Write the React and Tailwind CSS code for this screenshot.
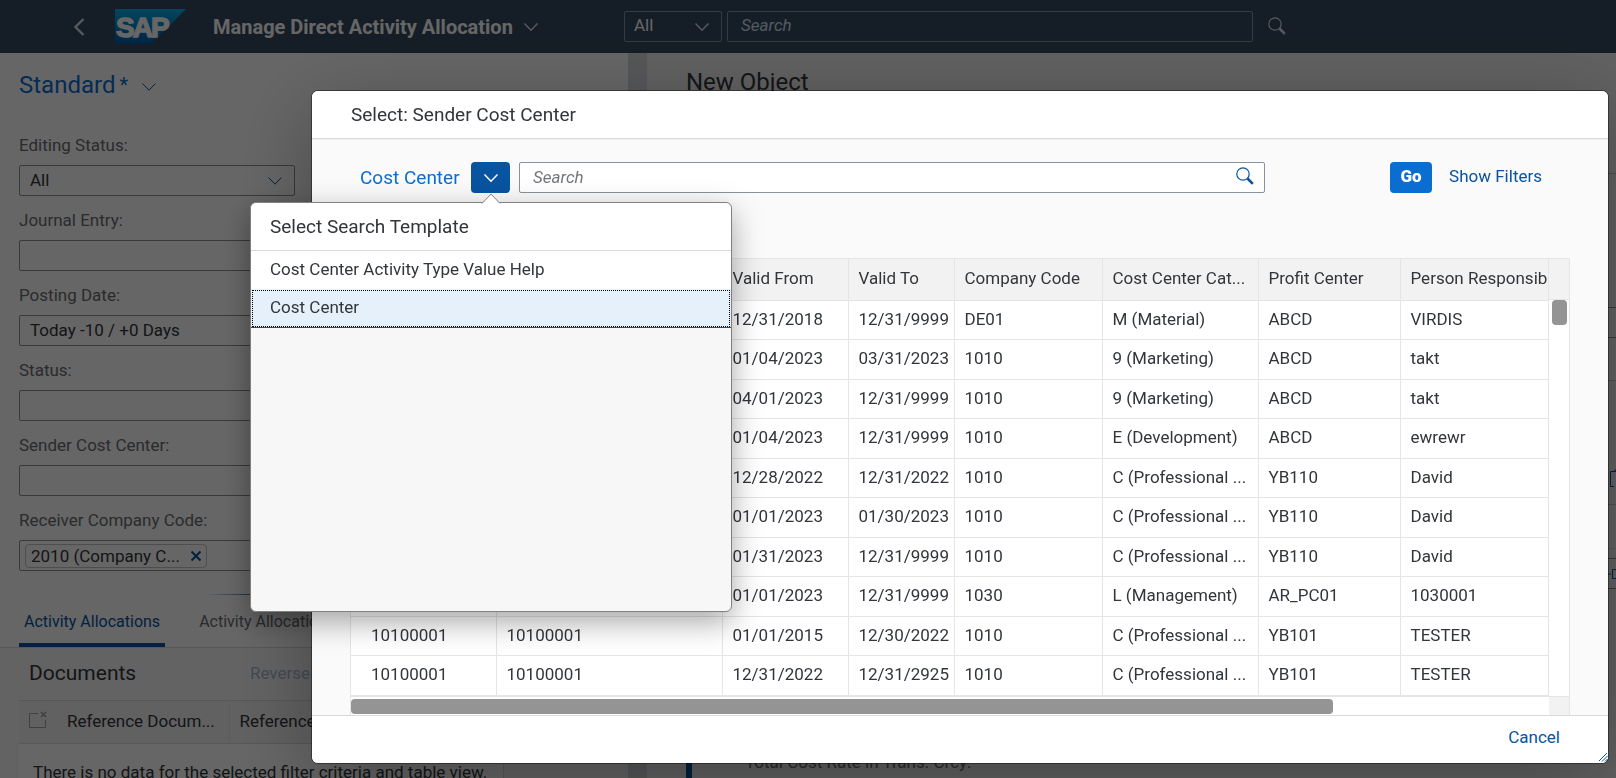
import { useState } from "react";

const columns = [
  { id: 'id', name: '', width: 'w-[145px]' },
  { id: 'text', name: '', width: 'w-[226px]' },
  { id: 'from', name: 'Valid From', width: 'w-[126px]' },
  { id: 'to', name: 'Valid To', width: 'w-[106px]' },
  { id: 'company', name: 'Company Code', width: 'w-[148px]' },
  { id: 'category', name: 'Cost Center Cat...', width: 'w-[156px]' },
  { id: 'profit', name: 'Profit Center', width: 'w-[142px]' },
  { id: 'person', name: 'Person Responsible', width: '' },
];

const rows = [
  ['', '', '12/31/2018', '12/31/9999', 'DE01', 'M (Material)', 'ABCD', 'VIRDIS'],
  ['', '', '01/04/2023', '03/31/2023', '1010', '9 (Marketing)', 'ABCD', 'takt'],
  ['', '', '04/01/2023', '12/31/9999', '1010', '9 (Marketing)', 'ABCD', 'takt'],
  ['', '', '01/04/2023', '12/31/9999', '1010', 'E (Development)', 'ABCD', 'ewrewr'],
  ['', '', '12/28/2022', '12/31/2022', '1010', 'C (Professional ...', 'YB110', 'David'],
  ['', '', '01/01/2023', '01/30/2023', '1010', 'C (Professional ...', 'YB110', 'David'],
  ['', '', '01/31/2023', '12/31/9999', '1010', 'C (Professional ...', 'YB110', 'David'],
  ['', '', '01/01/2023', '12/31/9999', '1030', 'L (Management)', 'AR_PC01', '1030001'],
  ['10100001', '10100001', '01/01/2015', '12/30/2022', '1010', 'C (Professional ...', 'YB101', 'TESTER'],
  ['10100001', '10100001', '12/31/2022', '12/31/2925', '1010', 'C (Professional ...', 'YB101', 'TESTER'],
];

const filters = [
  { id: 'journal', label: 'Journal Entry:', value: '' },
  { id: 'posting', label: 'Posting Date:', value: 'Today -10 / +0 Days' },
  { id: 'status', label: 'Status:', value: '' },
  { id: 'sender', label: 'Sender Cost Center:', value: '' },
];

const templates = ['Cost Center Activity Type Value Help', 'Cost Center'];

const Chevron = ({ className }) => (
  <svg className={`pointer-events-none ${className}`} width="16" height="10" viewBox="0 0 16 10" fill="none" stroke="currentColor">
    <path d="M1.500 1.500 8 8.200l6.500-6.700" />
  </svg>
);

const Magnifier = ({ className }) => (
  <svg className={className} width="18" height="18" viewBox="0 0 18 18" fill="none" stroke="currentColor">
    <circle cx="7" cy="7" r="6.2" strokeWidth="1.2" />
    <path d="m11.500 11.500 5.300 5.300" strokeWidth="2.6" />
  </svg>
);

const SapLogo = () => (
  <svg width="71" height="35" viewBox="0 0 71 35">
    <defs>
      <linearGradient id="sap" x1="0" y1="0" x2="0" y2="1">
        <stop offset="0" stopColor="#00b1eb" />
        <stop offset="0.5" stopColor="#0085cc" />
        <stop offset="1" stopColor="#005ca8" />
      </linearGradient>
    </defs>
    <path d="M0 0h71L36 35H0z" fill="url(#sap)" />
    <text x="1" y="28" fontFamily="Liberation Sans" fontWeight="700" fontSize="28" letterSpacing="-2" fill="#fff" stroke="#fff" strokeWidth="1.4">SAP</text>
  </svg>
);

const ShellBar = () => (
  <header className="flex h-[53px] shrink-0 items-center bg-[#354a5f] text-white">
    <button aria-label="Back" className="ml-[74px]">
      <svg width="11" height="18" viewBox="0 0 11 18" fill="none" stroke="#d1e0ee" strokeWidth="2.4">
        <path d="M9.500 1 1.500 9l8 8" />
      </svg>
    </button>
    <div className="ml-[30px]"><SapLogo /></div>
    <button className="ml-[27px] flex items-center gap-[10px] text-[20px] font-bold whitespace-nowrap">
      Manage Direct Activity Allocation
      <Chevron className="stroke-[1.5] text-[#d1e0ee]" />
    </button>
    <div className="relative ml-auto w-[98px]">
      <select aria-label="Search scope" className="block h-[31px] w-full appearance-none rounded-xs border border-[#7996b4] px-[9px] pb-[2px] text-[17px]">
        <option>All</option>
      </select>
      <Chevron className="absolute top-[11px] right-3 stroke-[1.5] text-[#d1e0ee]" />
    </div>
    <input aria-label="Search" placeholder="Search" className="ml-[5px] h-[31px] w-[526px] rounded-xs border border-[#7996b4] px-[13px] pb-[3px] text-[17px] placeholder:text-[#d1e0ee] placeholder:italic" />
    <button aria-label="Start search" className="mr-[330px] ml-[15px] pb-[2px] text-[#d1e0ee]"><Magnifier /></button>
  </header>
);

const FilterPanel = () => (
  <section className="flex w-[628px] shrink-0 flex-col bg-white text-[#32363a]">
    <button className="mt-4 ml-[19px] flex h-8 items-center self-start text-2xl text-[#0a6ed1]">
      Standard<span className="ml-1 text-xl">*</span>
      <Chevron className="mt-1 ml-[13px] text-[#0854a0]" />
    </button>

    <div className="mt-8 ml-[19px] flex w-[276px] flex-col gap-3 text-[17px] leading-6">
      <div className="relative">
        <label htmlFor="editing" className="block h-8 text-[#6a6d70]">Editing Status:</label>
        <select id="editing" className="block h-[31px] w-full appearance-none rounded-xs border border-[#89919a] px-[10px] pb-[2px]">
          <option>All</option>
        </select>
        <Chevron className="absolute right-3 bottom-[10px] text-[#0854a0]" />
      </div>
      {filters.map(f => (
        <div key={f.id}>
          <label htmlFor={f.id} className="block h-8 text-[#6a6d70]">{f.label}</label>
          <input id={f.id} defaultValue={f.value} className="block h-[31px] w-full rounded-xs border border-[#89919a] px-[10px] pb-[2px]" />
        </div>
      ))}
      <div>
        <label htmlFor="receiver" className="block h-8 text-[#6a6d70]">Receiver Company Code:</label>
        <div className="flex h-[31px] items-center rounded-xs border border-[#89919a] px-[5px]">
          <span className="flex h-6 items-center rounded-sm border border-[#c2c2c2] pr-1 pl-[5px] leading-5">
            2010 (Company C...
            <button aria-label="Remove" className="ml-[10px] text-[#0854a0]">
              <svg width="12" height="12" viewBox="0 0 12 12" fill="none" stroke="currentColor" strokeWidth="2">
                <path d="m1.500 1.500 9 9M10.500 1.500l-9 9" />
              </svg>
            </button>
          </span>
          <input id="receiver" className="w-8 flex-1" />
        </div>
      </div>
    </div>

    <div className="mt-[23px] ml-[205px] h-px w-[218px] shrink-0 bg-linear-to-r from-transparent via-[#3d84c6] via-20% to-transparent" />
    <nav className="flex h-[53px] shrink-0 gap-[34px] border-b border-[#d9d9d9] pl-[19px] text-base">
      <button className="border-b-4 border-[#0854a0] px-[5px] pt-[5px] text-[#0854a0]">Activity Allocations</button>
      <button className="border-b-4 border-transparent pt-[5px] text-[#6a6d70]">Activity Allocation Items</button>
    </nav>

    <div className="flex flex-1 bg-[#f7f7f7] pl-[19px]">
      <div className="w-[485px] border-r border-[#d9d9d9]">
        <div className="flex h-[52px] items-center justify-between pr-[193px] pl-[10px]">
          <h2 className="text-[21px]">Documents</h2>
          <button className="text-[17px] text-[#0854a0]/40">Reverse</button>
        </div>
        <table className="w-full table-fixed bg-white text-[17px]">
          <thead>
            <tr className="h-[43px] border-y border-[#d9d9d9] bg-[#f2f2f2] text-left">
              <th className="w-[38px] pb-1 pl-[10px]">
                <svg width="18" height="18" viewBox="0 0 18 18" fill="none" stroke="#a0a0a0">
                  <path d="M9 2.500H.5v14h16V9" />
                  <path d="m12 1 5 5M17 1l-5 5" strokeWidth="1.5" />
                </svg>
              </th>
              <th className="w-[172px] border-r border-[#e5e5e5] px-[10px] font-normal whitespace-nowrap">Reference Docum...</th>
              <th className="px-[10px] font-normal">Reference Item</th>
            </tr>
          </thead>
          <tbody>
            <tr className="h-[57px]">
              <td colSpan={3} className="pl-[14px] whitespace-nowrap">There is no data for the selected filter criteria and table view.</td>
            </tr>
          </tbody>
        </table>
      </div>
    </div>
  </section>
);

const ObjectPanel = () => (
  <section className="flex flex-1 flex-col bg-[#f2f2f2] text-[#32363a]">
    <div className="h-[121px] shrink-0 border-b border-[#c4c4c4] pt-[13px] pl-[39px]">
      <h1 className="text-2xl leading-8">New Object</h1>
    </div>
    <div className="flex h-[207px] shrink-0 flex-col justify-end border-b border-[#c4c4c4] pb-[42px]">
      <div className="h-[31px] border-y border-[#89919a]" />
    </div>
    <div className="flex h-[124px] shrink-0 items-end justify-end border-b border-[#c4c4c4] pb-[17px]">
      <svg width="6" height="18" viewBox="0 0 6 18" fill="none" stroke="#0854a0">
        <path d="M6 2.500H.5v15H4M3 3l3-2.500" />
      </svg>
    </div>
    <div className="h-11 shrink-0 border-b border-[#d9d9d9]" />
    <div className="mt-[9px] flex h-[31px] shrink-0 items-center justify-end border-y border-[#89919a]">
      <svg width="8" height="12" viewBox="0 0 8 12" fill="none" stroke="#0854a0">
        <path d="M0 6h3M8 1.500H4.500v9H8" />
      </svg>
    </div>
    <div className="mt-auto ml-[39px] flex h-10 items-start border-l-[6px] border-[#0854a0] pl-[53px] text-[17px] leading-6 text-[#6a6d70]">
      <span className="pt-3">Total Cost Rate in Trans. Crcy:</span>
    </div>
  </section>
);

const ValueHelpTable = () => (
  <div className="mx-[38px] border-x border-t border-[#e5e5e5]">
    <div className="flex">
      <div className="min-w-0 flex-1 overflow-hidden">
        <table className="w-full table-fixed bg-white text-[17px]">
          <thead>
            <tr className="h-[41px] border-b border-[#e5e5e5] bg-[#f2f2f2] text-left">
              {columns.map(c => (
                <th key={c.id} className={`overflow-hidden border-r border-[#e5e5e5] pb-[2px] pl-[10px] font-normal whitespace-nowrap first:pl-5 ${c.width}`}>{c.name}</th>
              ))}
            </tr>
          </thead>
          <tbody>
            {rows.map((row, i) => (
              <tr key={i} className="h-10 border-b border-[#e5e5e5] odd:h-[39px]">
                {row.map((cell, j) => (
                  <td key={j} className="overflow-hidden border-r border-[#e5e5e5] pl-[10px] whitespace-nowrap first:pl-5">{cell}</td>
                ))}
              </tr>
            ))}
          </tbody>
        </table>
      </div>
      <div className="w-5 bg-white">
        <div className="h-[41px] border-b border-[#e5e5e5] bg-[#f2f2f2]" />
        <div className="ml-[3px] h-[25px] w-[15px] rounded-sm bg-[#949494]" />
      </div>
    </div>
    <div className="flex h-[19px] border-t border-[#e5e5e5] bg-white">
      <div className="flex-1 pt-[2px]">
        <div className="h-[15px] w-[82%] rounded-sm bg-[#949494]" />
      </div>
      <div className="w-5 bg-[#f2f2f2]" />
    </div>
  </div>
);

const TemplatePopover = ({ selected, onSelect }) => (
  <div className="absolute top-10 -left-[221px] z-10 w-[482px] rounded-md border border-[#808080] bg-[#f7f7f7] text-[#32363a] shadow-[0_10px_30px_0_rgba(0,0,0,0.35)]">
    <svg className="absolute -top-[10px] left-[230px]" width="20" height="11" viewBox="0 0 20 11">
      <path d="M1 10.500 10 1l9 9.500" fill="#fff" stroke="#808080" />
      <path d="M1.500 10.500h17" stroke="#fff" />
    </svg>
    <div className="flex h-12 items-center rounded-t-md border-b border-[#d9d9d9] bg-white px-[19px] pt-[2px] text-[19px]">Select Search Template</div>
    <ul className="h-[360px] text-[17px]">
      {templates.map(t => (
        <li key={t}>
          <button
            className={`flex w-full items-center px-[19px] text-left ${t == selected ? 'h-[39px] border-b border-[#0854a0] bg-[#e5f0fa] outline-1 -outline-offset-2 outline-dotted outline-black' : 'h-[38px] bg-white'}`}
            onClick={() => onSelect(t)}
          >
            {t}
          </button>
        </li>
      ))}
    </ul>
  </div>
);

const SelectDialog = () => {
  const [template, setTemplate] = useState(templates[1]);

  return (
    <div role="dialog" aria-label="Select: Sender Cost Center" className="relative rounded-md bg-[#fafafa] text-[#32363a] shadow-[0_0_0_1px_rgba(0,0,0,0.4),0_20px_80px_0_rgba(0,0,0,0.3)]">
      <div className="flex h-12 items-center rounded-t-md border-b border-[#d9d9d9] bg-white pt-[2px] pl-[39px] text-[19px] shadow-xs">Select: Sender Cost Center</div>

      <div className="flex h-[119px] items-start pt-[23px] pl-[48px]">
        <span className="w-[111px] text-[19px] leading-8 text-[#0a6ed1]">{template}</span>
        <div className="relative">
          <button aria-label="Select search template" className="flex h-[31px] w-[39px] items-center justify-center rounded-sm bg-[#0854a0] text-white">
            <Chevron className="stroke-[1.5]" />
          </button>
          <TemplatePopover selected={template} onSelect={setTemplate} />
        </div>
        <div className="relative ml-[9px] w-[746px]">
          <input aria-label="Search" placeholder="Search" className="block h-[31px] w-full rounded-xs border border-[#89919a] bg-white px-[13px] pb-[2px] text-[17px] placeholder:text-[#74777a] placeholder:italic" />
          <button aria-label="Start search" className="absolute top-[5px] right-[11px] text-[#0854a0]"><Magnifier /></button>
        </div>
        <div className="mr-[66px] ml-auto flex items-center gap-[17px] text-[17px]">
          <button className="h-[31px] w-[42px] rounded-sm bg-[#0a6ed1] pb-[2px] font-black text-white">Go</button>
          <button className="pb-[2px] text-[#0854a0]">Show Filters</button>
        </div>
      </div>

      <ValueHelpTable />

      <div className="relative flex h-12 items-center justify-end rounded-b-md border-t border-[#d9d9d9] bg-white pr-12 pb-[2px] text-[17px]">
        <button className="text-[#0854a0]">Cancel</button>
        <svg className="absolute right-0 bottom-px" width="10" height="10" viewBox="0 0 10 10" stroke="#0854a0">
          <path d="M1 9 9 1M4 9.500l5.500-5.500M7 9.500l2.500-2.500" />
        </svg>
      </div>
    </div>
  );
};

const App = () => {
  return (
    <div className="flex h-screen flex-col overflow-hidden font-[Roboto,sans-serif]">
      <ShellBar />
      <main className="flex min-h-0 flex-1">
        <FilterPanel />
        <div className="w-[19px] shrink-0 bg-[#d5dadc]" />
        <ObjectPanel />
      </main>
      <div className="fixed inset-0 bg-black/60 pt-[91px] pr-2 pl-[312px]">
        <SelectDialog />
      </div>
    </div>
  );
}

export default App;
